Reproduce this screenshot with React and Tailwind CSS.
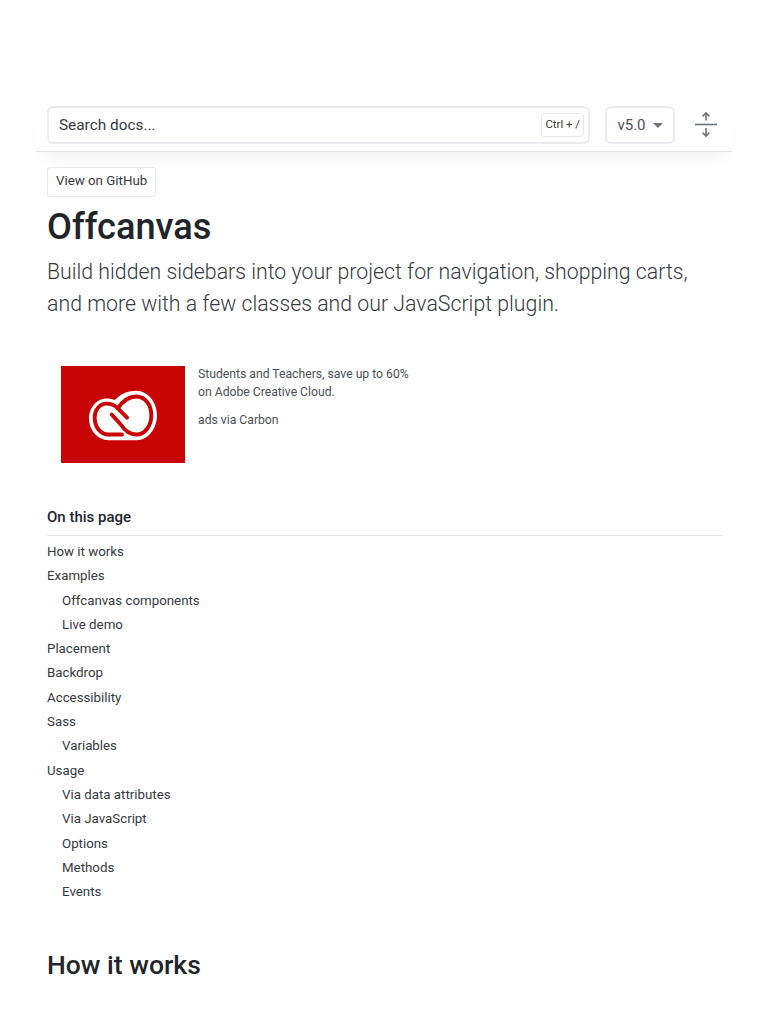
const toc = [
  ["How it works", 0], ["Examples", 0], ["Offcanvas components", 1], ["Live demo", 1], ["Placement", 0], ["Backdrop", 0], ["Accessibility", 0], ["Sass", 0], ["Variables", 1], ["Usage", 0], ["Via data attributes", 1], ["Via JavaScript", 1], ["Options", 1], ["Methods", 1], ["Events", 1],
];

function CloudLogo() {
  return (
    <svg width="68" height="51" viewBox="0 0 66 48" fill="none">
      <path fill="#fff" d="M46 0C36 0 30 4 25 9C22 8 20 7.500 17 7.500C7 7.500 0 17 0 27C0 38 8 48 19 48L46 48C58 48 66 36 66 24C66 11 57 0 46 0Z" />
      <g stroke="#c80404" strokeWidth="3.800" strokeLinecap="round" strokeLinejoin="round">
        <path d="M37 26L28 17C24 13 21 12.500 17 12.500C10 12.500 5.500 19 5.500 26C5.500 35 11 42.500 19 42.500L32 42.500" />
        <path d="M22 23L31 33C35 39 40 42.500 46 42.500C55 42.500 60.500 33 60.500 24C60.500 13 54 5.500 46 5.500C38 5.500 32 11 28 17" />
      </g>
    </svg>
  );
}

export default function App() {
  return (
    <div className="min-h-[1024px] bg-white text-[#212529] font-['Roboto',sans-serif] overflow-hidden pt-[96px]">
      <header className="mx-9 h-[56px] flex items-center pl-[11px] pr-[15px] pt-[3px] gap-[15px] border-b border-[#dee0e3] shadow-[0_14px_18px_-8px_rgba(0,0,0,0.05)] bg-white">
        <div className="flex-1 h-[38px] border-2 border-[#e9ebee] rounded-md flex items-center justify-between pl-[10px] pr-[4px]">
          <span className="text-[15.360px] text-[#343a40] pt-[1px]">Search docs...</span>
          <span className="text-[11.400px] leading-none h-[24px] px-[3px] border border-[#e6e8ea] rounded-[3px] flex items-center text-[#343a40]">Ctrl + /</span>
        </div>
        <div className="w-[70px] h-[38px] border-2 border-[#e9ebee] rounded-md flex items-center justify-center gap-[7px]">
          <span className="text-[15px] text-[#495057]">v5.0</span>
          <span className="w-0 h-0 border-x-[5px] border-x-transparent border-t-[5px] border-t-[#6c757d]" />
        </div>
        <svg width="22" height="28" viewBox="0 0 22 28" fill="none" stroke="#6c757d" strokeWidth="1.600" className="ml-[5px]">
          <path d="M0 13.500H22" />
          <path d="M11 9.500V2M7.500 5.500 11 2l3.500 3.500" />
          <path d="M11 17V25M7.500 21.500 11 25l3.500-3.500" />
        </svg>
      </header>

      <main className="px-[47px]">
        <a className="mt-[15px] inline-flex items-center h-[30px] px-[8px] pb-[2px] border border-[#e6e8ea] rounded-[3px] text-[13.300px] text-[#343a40]">View on GitHub</a>
        <h1 className="mt-[8px] text-[36.200px] leading-[43px] font-medium">Offcanvas</h1>
        <p className="mt-[8px] text-[21.300px] leading-[32px] font-light text-[#343a40]">Build hidden sidebars into your project for navigation, shopping carts,<br />and more with a few classes and our JavaScript plugin.</p>

        <section className="mt-[46px] ml-[14px] flex gap-[13px]">
          <div className="w-[124px] h-[97px] bg-[#c80404] flex items-center justify-center pt-[1px]">
            <CloudLogo />
          </div>
          <div className="text-[12.200px] leading-[17.600px] text-[#495057]">
            <p>Students and Teachers, save up to 60%<br />on Adobe Creative Cloud.</p>
            <p className="mt-[11px]">ads via Carbon</p>
          </div>
        </section>

        <section className="mt-[45px] mr-[-1px]">
          <h2 className="text-[15px] leading-[18px] font-medium pb-[9px] border-b border-[#dee2e6]">On this page</h2>
          <ul className="mt-[4px] text-[13.300px] leading-[24.300px] text-[#343a40]">
            {toc.map(([t, n]) => (
              <li key={t} className={n ? "pl-[15px]" : ""}>{t}</li>
            ))}
          </ul>
        </section>
        <h2 className="mt-[45px] text-[26.500px] leading-[32px] font-medium">How it works</h2>
      </main>
    </div>
  );
}
